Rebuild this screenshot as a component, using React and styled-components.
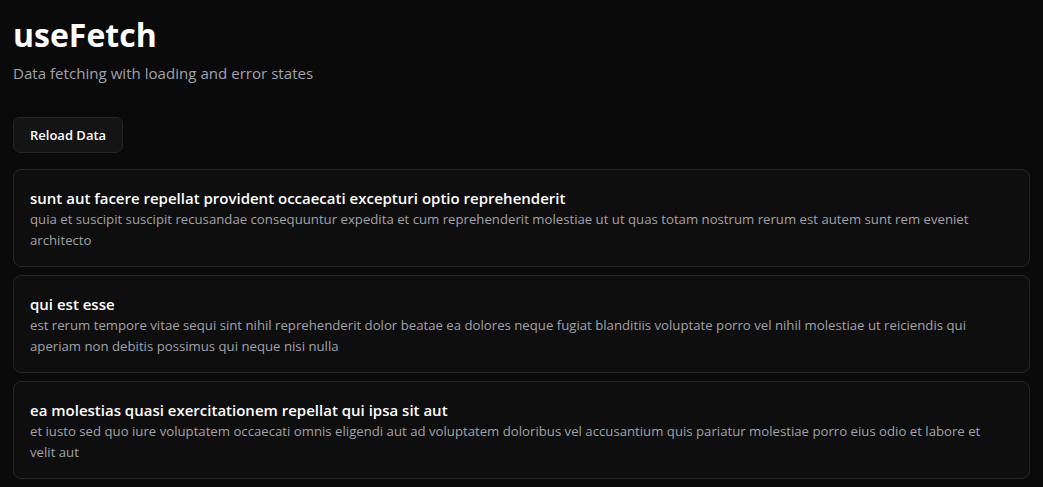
import React from "react";
import styled, { createGlobalStyle } from "styled-components";

const GlobalStyle = createGlobalStyle`
  * { box-sizing: border-box; }
  body {
    margin: 0;
    background: #0a0a0a;
    color: #fafafa;
    font-family: "Open Sans", "Noto Sans", sans-serif;
  }
`;

const Page = styled.div`
  padding: 13px 13px 16px;
  display: flex;
  flex-direction: column;
`;

const Title = styled.h1`
  margin: 0;
  font-size: 32px;
  line-height: 44px;
  font-weight: 700;
  color: #ffffff;
`;

const Subtitle = styled.p`
  margin: 5px 0 0;
  font-size: 15.1px;
  line-height: 22px;
  color: #a1a1aa;
`;

const Button = styled.button`
  align-self: flex-start;
  margin-top: 33px;
  height: 36px;
  padding: 0 16px;
  border-radius: 7px;
  border: 1px solid #262626;
  background: #141414;
  color: #ffffff;
  font-family: inherit;
  font-size: 13px;
  font-weight: 600;
  cursor: pointer;
`;

const List = styled.div`
  margin-top: 16px;
  display: flex;
  flex-direction: column;
  gap: 8px;
`;

const Card = styled.div`
  padding: 17px 20px 15px 16px;
  border: 1px solid #262626;
  border-radius: 8px;
  background: #0e0e0e;
`;

const CardTitle = styled.h3`
  margin: 0;
  font-size: 15px;
  line-height: 22px;
  font-weight: 600;
  color: #ffffff;
`;

const CardBody = styled.p`
  margin: 0;
  font-size: 13.2px;
  line-height: 21px;
  color: #a1a1aa;
`;

const posts = [
  {
    title: "sunt aut facere repellat provident occaecati excepturi optio reprehenderit",
    body: "quia et suscipit suscipit recusandae consequuntur expedita et cum reprehenderit molestiae ut ut quas totam nostrum rerum est autem sunt rem eveniet architecto",
  },
  {
    title: "qui est esse",
    body: "est rerum tempore vitae sequi sint nihil reprehenderit dolor beatae ea dolores neque fugiat blanditiis voluptate porro vel nihil molestiae ut reiciendis qui aperiam non debitis possimus qui neque nisi nulla",
  },
  {
    title: "ea molestias quasi exercitationem repellat qui ipsa sit aut",
    body: "et iusto sed quo iure voluptatem occaecati omnis eligendi aut ad voluptatem doloribus vel accusantium quis pariatur molestiae porro eius odio et labore et velit aut",
  },
];

export default function App() {
  return (
    <>
      <GlobalStyle />
      <Page>
        <Title>useFetch</Title>
        <Subtitle>Data fetching with loading and error states</Subtitle>
        <Button>Reload Data</Button>
        <List>
          {posts.map((p) => (
            <Card key={p.title}>
              <CardTitle>{p.title}</CardTitle>
              <CardBody>{p.body}</CardBody>
            </Card>
          ))}
        </List>
      </Page>
    </>
  );
}
